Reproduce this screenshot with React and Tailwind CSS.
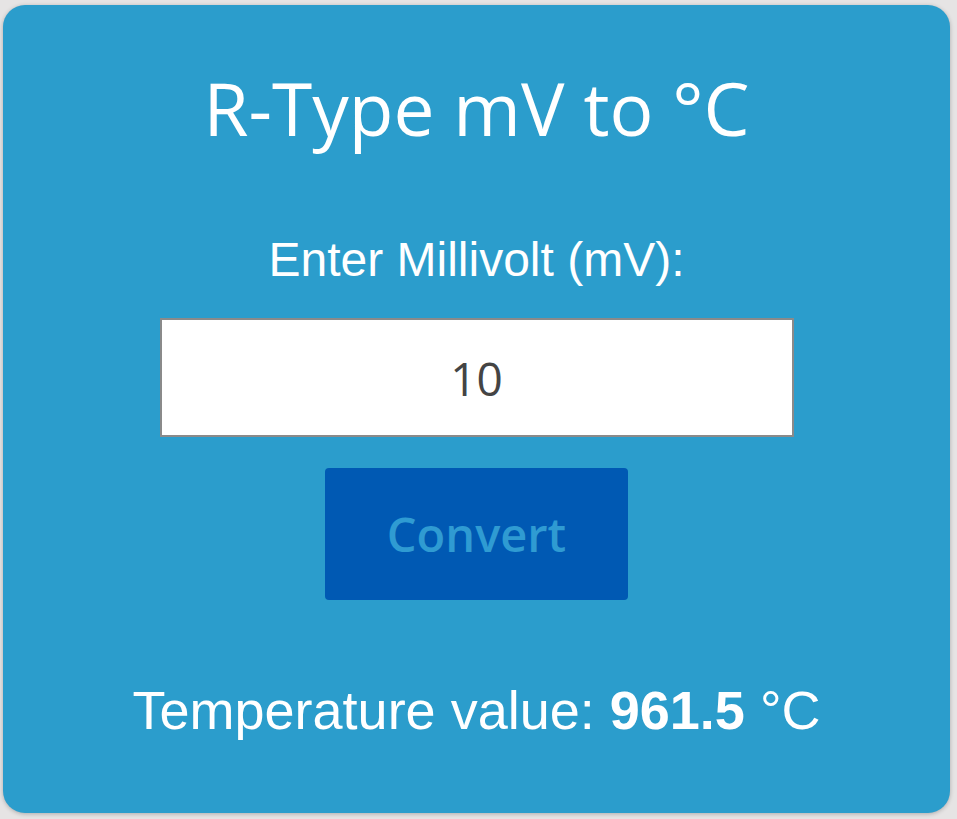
import { useState } from "react";

const App = () => {
    const [mv, setMv] = useState("10");
    const [result] = useState("961.5");

    return (
        <div className="min-h-screen w-full bg-[#e6e4e4] pt-[5px] pl-[3px]">
            <div className="w-[947px] h-[808px] rounded-[22px] bg-[#2b9dcc] shadow-[0_1px_4px_rgba(0,0,0,0.25)] flex flex-col items-center pt-[53px]">
                <h1 className="font-['Open_Sans',sans-serif] text-[73px] leading-[99px] font-normal text-white">
                    R-Type mV to °C
                </h1>
                <label className="mt-[75px] font-['Liberation_Sans',Arial,sans-serif] text-[48px] leading-[55px] text-white">
                    Enter Millivolt (mV):
                </label>
                <input
                    type="text"
                    value={mv}
                    onChange={(e) => setMv(e.target.value)}
                    className="mt-[31px] w-[634px] h-[119px] bg-white border-2 border-[#8a8a8a] text-center font-['Open_Sans',sans-serif] text-[46px] text-[#444444] outline-none"
                />
                <button className="mt-[31px] w-[303px] h-[132px] rounded-[4px] bg-[#0059b3] font-['Open_Sans',sans-serif] font-semibold text-[47px] text-[#2f9bd2]">
                    Convert
                </button>
                <p className="mt-[79px] font-['Liberation_Sans',Arial,sans-serif] text-[54px] leading-[62px] text-white">
                    Temperature value: <span className="font-bold">{result}</span> °C
                </p>
            </div>
        </div>
    );
};

export default App;
